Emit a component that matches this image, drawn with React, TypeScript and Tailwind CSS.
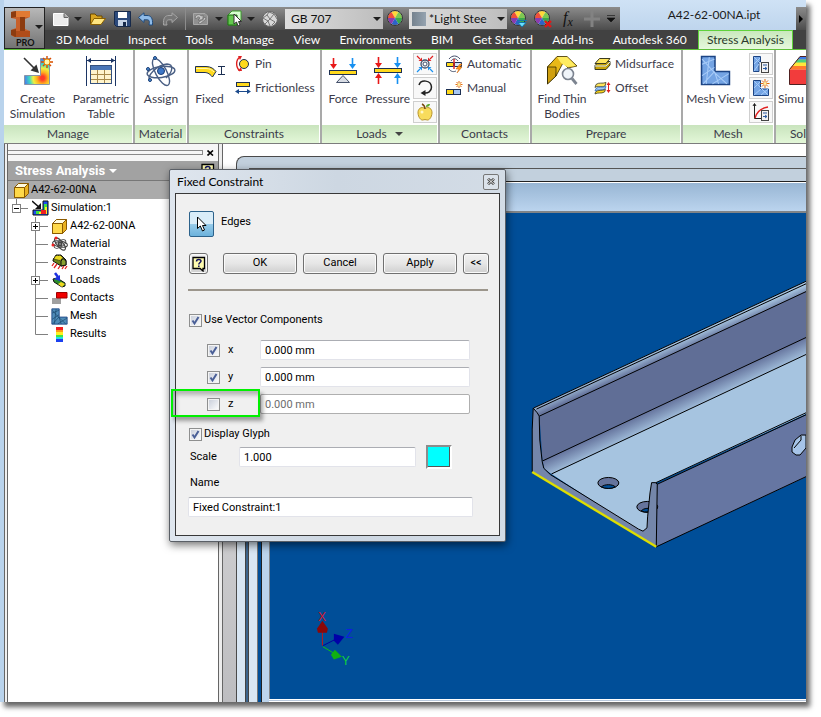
import type { ReactNode } from 'react'

type IconProps = { w: number; h: number; children: ReactNode }

function Icon({ w, h, children }: IconProps) {
  return (
    <svg width={w} height={h} viewBox={`0 0 ${w} ${h}`} className="block shrink-0" aria-hidden="true">
      {children}
    </svg>
  )
}

function Caret({ color = '#1e1e1e' }: { color?: string }) {
  return (
    <Icon w={8} h={4}>
      <path d="M0 0H8L4 4Z" fill={color} />
    </Icon>
  )
}

/* ---------- Quick access toolbar icons ---------- */

const NewIcon = () => (
  <Icon w={18} h={16}>
    <path d="M1.500 2.500H12L16 6.500V14.500H1.500Z" fill="#ececec" stroke="#fff" />
    <path d="M12 2.500V6.500H16" fill="#aaa" stroke="#666" />
  </Icon>
)

const OpenIcon = () => (
  <Icon w={18} h={16}>
    <path d="M1.500 13V3H6L8 5H13V7" fill="#d9a520" stroke="#6b4a00" />
    <path d="M1.500 13.500L5 7.500H16.500L12 13.500Z" fill="#ffe680" stroke="#8a6000" />
  </Icon>
)

const SaveIcon = () => (
  <Icon w={17} h={16}>
    <path d="M.5.5H16.500V15.500H2.500L.5 13.500Z" fill="#2c4a7c" stroke="#16294a" />
    <rect x="4" y="1" width="9" height="6" fill="#fff" />
    <rect x="4" y="9" width="9" height="6" fill="#c5d3e6" />
    <rect x="9" y="11" width="3" height="4" fill="#16294a" />
  </Icon>
)

const UndoIcon = () => (
  <Icon w={16} h={14}>
    <path d="M.5 5.500L6 .8V3.500H9C13 3.500 15 6 14.500 13H11C12 9 11 7.800 9 7.800H6V10.500Z" fill="#8fbbe8" stroke="#1f4a7c" />
  </Icon>
)

const RedoIcon = () => (
  <Icon w={16} h={14}>
    <path d="M15.500 5.500L10 .8V3.500H7C3 3.500 1 6 1.500 13H5C4 9 5 7.800 7 7.800H10V10.500Z" fill="#777" stroke="#a5a5a5" />
  </Icon>
)

const UpdateIcon = () => (
  <Icon w={17} h={15}>
    <path d="M1.500 2.500H13L15.500 5V13.500H1.500Z" fill="#909090" stroke="#a8a8a8" />
    <path d="M3 6C5 3 8 3 9 5L11 4V9H6L8 7C7 5 5 6 4 8ZM6 12L13 6L14 8L8 13Z" fill="#c4c4c4" stroke="#686868" strokeWidth="0.700" />
  </Icon>
)

const SelectIcon = () => (
  <Icon w={17} h={17}>
    <path d="M1 5L5 1H14V11L10 15H1Z" fill="#d7ffd0" stroke="#3a9c2a" />
    <path d="M1 5H10V15H1Z" fill="#64c84e" stroke="#1f6f14" />
    <path d="M7 4V14L9.500 12L11 16L13 15L11.500 11.500H14.500Z" fill="#fff" stroke="#333" />
  </Icon>
)

const SphereIcon = () => (
  <Icon w={16} h={16}>
    <circle cx="8" cy="8" r="7.500" fill="#d8d8d8" stroke="#666" />
    <path d="M1 7L5 4L8 8L12 3L15 8M3 13L6 10L8 15M8 8L13 11L10 14M5 4L7 1L12 3M1 7L6 10L8 8" fill="none" stroke="#777" />
  </Icon>
)

function Wheel({ badge }: { badge?: 'down' | 'x' }) {
  return (
    <Icon w={18} h={18}>
      <circle cx="8" cy="8" r="7.500" fill="#e8e8e8" />
      <path d="M8 8L4.500 2A7 7 0 0 1 11.500 2Z" fill="#ffd83a" />
      <path d="M8 8L11.500 2A7 7 0 0 1 15 8Z" fill="#7ec850" />
      <path d="M8 8H15A7 7 0 0 1 11.500 14Z" fill="#3aa84c" />
      <path d="M8 8L11.500 14A7 7 0 0 1 4.500 14Z" fill="#2c62c8" />
      <path d="M8 8L4.500 14A7 7 0 0 1 1 8Z" fill="#8a3cb0" />
      <path d="M8 8H1A7 7 0 0 1 4.500 2Z" fill="#f0503a" />
      <circle cx="8" cy="8" r="7.500" fill="none" stroke="#333" />
      {badge === 'down' && <path d="M7 10.500H17M8 12.500H16L12 17Z" fill="#6ce0ff" stroke="#1678a8" />}
      {badge === 'x' && <path d="M11 11L17 17M17 11L11 17" stroke="#e01818" strokeWidth="2.400" />}
    </Icon>
  )
}

const PlusIcon = () => (
  <Icon w={16} h={16}>
    <path d="M8 0V16M0 8H16" stroke="#828282" strokeWidth="3" />
  </Icon>
)

/* ---------- Ribbon icons ---------- */

const CreateSimIcon = () => (
  <Icon w={32} h={34}>
    <defs>
      <radialGradient id="heat" cx="0.72" cy="0.75" r="0.75">
        <stop offset="0.1" stopColor="#ff3a2a" />
        <stop offset="0.3" stopColor="#ffb020" />
        <stop offset="0.5" stopColor="#f0f040" />
        <stop offset="0.7" stopColor="#40d8c0" />
        <stop offset="1" stopColor="#4a70f0" />
      </radialGradient>
    </defs>
    <path d="M2.500 20.500H18.500V3.500H27.500V29.500H2.500Z" fill="url(#heat)" stroke="#8a94a8" />
    <path d="M2 3L14 15" stroke="#333" strokeWidth="1.600" />
    <path d="M17 18L8.500 15.500L14.500 9.500Z" fill="#333" />
    <path d="M25 1V13M19 7H31M21 3L29 11M29 3L21 11" stroke="#d84c00" strokeWidth="1.400" />
    <circle cx="25" cy="7" r="3" fill="#fff6b0" stroke="#e88a00" />
  </Icon>
)

const ParamTableIcon = () => (
  <Icon w={32} h={32}>
    <path d="M1.500 1V31M30.500 1V31M2 5.500H30" stroke="#1c3564" fill="none" />
    <path d="M2 5.500L6 3V8ZM30 5.500L26 3V8Z" fill="#1c3564" />
    <rect x="5.500" y="10.500" width="21" height="18" fill="#fff4cc" stroke="#34507e" />
    <rect x="6" y="11" width="20" height="4" fill="#4a76b8" />
    <path d="M6 19.500H26M6 24.500H26M12.500 15V28M19.500 15V28" stroke="#a88a4a" />
  </Icon>
)

const AtomIcon = () => (
  <Icon w={32} h={32}>
    <g fill="none" stroke="#4a5f84" strokeWidth="1.400">
      <ellipse cx="16" cy="17" rx="14" ry="5.500" transform="rotate(-8 16 17)" />
      <ellipse cx="16" cy="17" rx="15" ry="5.500" transform="rotate(62 16 17)" />
      <path d="M5 26C1 21 12 10 22 9C29 9 28 17 21 23" />
    </g>
    <circle cx="16" cy="16" r="3.500" fill="#3e78c8" stroke="#1a3c74" />
    <circle cx="10" cy="3" r="1.500" fill="#4a90d8" stroke="#1a3c74" />
    <circle cx="3" cy="14" r="1.500" fill="#4a90d8" stroke="#1a3c74" />
    <circle cx="5" cy="25" r="1.500" fill="#4a90d8" stroke="#1a3c74" />
  </Icon>
)

const FixedIcon = () => (
  <Icon w={32} h={32}>
    <path d="M1.500 11.500H12C17 11.500 20 14 22 16.500L18.500 22C15 18 13 17.500 10 17.500H1.500Z" fill="#ffd91c" stroke="#1c2f52" />
    <path d="M2 13.500H12C16 13.500 18 15 20 17" stroke="#fff7b0" fill="none" />
    <path d="M24 11.500H31M27.500 12V19M24 19.500H31" stroke="#1c2f52" fill="none" />
  </Icon>
)

const PinIcon = () => (
  <Icon w={16} h={18}>
    <circle cx="9" cy="9" r="4.500" fill="#ffd91c" stroke="#1c2f52" />
    <path d="M5 2C.5 5 .5 12 5 16" stroke="#e02020" fill="none" strokeWidth="1.400" />
    <path d="M3 1H7L5 5ZM3 16H7L6 12Z" fill="#e02020" />
  </Icon>
)

const FrictionlessIcon = () => (
  <Icon w={16} h={14}>
    <rect x="1.500" y="1.500" width="13" height="4" fill="#ffd91c" stroke="#1c2f52" />
    <path d="M1 10.500H15" stroke="#1c4a8c" />
    <path d="M0 10.500L4 8V13ZM16 10.500L12 8V13Z" fill="#1c4a8c" />
  </Icon>
)

const ForceIcon = () => (
  <Icon w={28} h={30}>
    <path d="M4.500 3V12" stroke="#e81818" strokeWidth="1.600" />
    <path d="M1 9H8L4.500 14Z" fill="#e81818" />
    <path d="M23.500 3V12" stroke="#1890f0" strokeWidth="1.600" />
    <path d="M20 9H27L23.500 14Z" fill="#1890f0" />
    <rect x=".5" y="15.500" width="27" height="4" fill="#ffd91c" stroke="#1c2f52" />
    <path d="M14 20.500L20.500 27.500H7.500Z" fill="#d8dce4" stroke="#44506a" />
  </Icon>
)

const PressureIcon = () => (
  <Icon w={28} h={30}>
    <path d="M4.500 2V11M4.500 29V20" stroke="#e81818" strokeWidth="1.600" />
    <path d="M1 8H8L4.500 13ZM1 23H8L4.500 18Z" fill="#e81818" />
    <path d="M23.500 2V11M23.500 29V20" stroke="#1890f0" strokeWidth="1.600" />
    <path d="M20 8H27L23.500 13ZM20 23H27L23.500 18Z" fill="#1890f0" />
    <rect x=".5" y="13.500" width="27" height="4" fill="#ffd91c" stroke="#1c2f52" />
  </Icon>
)

const BearingIcon = () => (
  <Icon w={18} h={18}>
    <path d="M1 1L4 4M17 1L14 4" stroke="#e02020" strokeWidth="1.200" />
    <path d="M6 6H2.500L6 2.500ZM12 6H15.500L12 2.500Z" fill="#e02020" />
    <path d="M1 17L4 14M17 17L14 14" stroke="#1890f0" strokeWidth="1.200" />
    <path d="M6 12H2.500L6 15.500ZM12 12H15.500L12 15.500Z" fill="#1890f0" />
    <circle cx="9" cy="9" r="4" fill="#e8edf4" stroke="#44506a" strokeWidth="1.300" />
    <circle cx="9" cy="9" r="2" fill="#fff" stroke="#44506a" />
  </Icon>
)

const MomentIcon = () => (
  <Icon w={18} h={18}>
    <path d="M3 6C5 0 15 1 15.500 8C15.500 12.500 12 14.500 8 14" stroke="#222" strokeWidth="1.500" fill="none" />
    <path d="M4.500 14L9.500 11V17Z" fill="#222" />
  </Icon>
)

const AppleIcon = () => (
  <Icon w={16} h={18}>
    <path d="M8 5.500C4 3 .8 6 1 10C1.300 14.500 4 17.500 6 17C7 16.500 9 16.500 10 17C12 17.500 14.700 14.500 15 10C15.200 6 12 3 8 5.500Z" fill="#f8dc5c" stroke="#b8942c" />
    <path d="M8 6C8 3 7 2 5 1" stroke="#7a4a10" fill="none" strokeWidth="1.400" />
    <path d="M9 4C9 1 11 1 13 1C13 3 11 4 9 4Z" fill="#5ca82c" />
    <circle cx="5" cy="9" r="1.500" fill="#fff8c8" />
  </Icon>
)

const AutoContactIcon = () => (
  <Icon w={17} h={18}>
    <path d="M3 4C6 0 11 0 14 4M5 6C7 3 10 3 12 6M3 14C5 17 8 17 10 16" stroke="#44506a" fill="none" />
    <path d="M.5 7.500H7.500V11.500H.5Z" fill="#ffd91c" stroke="#1c2f52" />
    <path d="M8.500 7.500H15.500V11.500H8.500Z" fill="#d8e6fa" stroke="#1c2f52" />
    <path d="M8 4V14" stroke="#e02020" strokeWidth="1.400" />
    <path d="M14 9L10 14H13L11 18L16 12H13.500L16 9Z" fill="#ff9a1c" stroke="#c85a00" strokeWidth="0.500" />
  </Icon>
)

const ManualContactIcon = () => (
  <Icon w={17} h={16}>
    <rect x=".5" y="9.500" width="7" height="5" fill="#ffd91c" stroke="#1c2f52" />
    <rect x="7.500" y="9.500" width="7" height="5" fill="#a8c8f4" stroke="#1c2f52" />
    <path d="M13 1V8M9.500 4.500H16.500M10.500 2L15.500 7M15.500 2L10.500 7" stroke="#e06a10" />
    <circle cx="13" cy="4.500" r="1.500" fill="#fff0a0" />
  </Icon>
)

const ThinBodiesIcon = () => (
  <Icon w={32} h={32}>
    <path d="M1.500 12L12 1.500L10 21L1.500 29Z" fill="#d0a010" stroke="#3c3000" />
    <path d="M1.500 12L11 1.500H21L31 11L22 13L17 8L10 21V12Z" fill="#e8b818" stroke="#3c3000" strokeWidth="0.800" />
    <path d="M11 2H21L30 11L21 12L15 8Z" fill="#ffec60" />
    <circle cx="22" cy="19" r="5.500" fill="#eef4fa" fillOpacity="0.900" stroke="#7c8490" strokeWidth="1.600" />
    <path d="M26 23.500L30.500 29" stroke="#7c8490" strokeWidth="2.800" />
  </Icon>
)

const MidsurfaceIcon = () => (
  <Icon w={17} h={14}>
    <path d="M1 8.500L5 4.500H16V8L12 12.500H1Z" fill="#c8a408" stroke="#3a3a20" />
    <path d="M1 6.500L5.500 1.500H16L12 6.500Z" fill="#ffe65c" stroke="#3a3a20" />
    <path d="M1 9H12L16 5" stroke="#cfe0ff" fill="none" />
  </Icon>
)

const OffsetIcon = () => (
  <Icon w={17} h={14}>
    <path d="M2 3.500C5 1 8 3 12 1.500L11 5C7 7 4 4 1 6.500Z" fill="#ffe65c" stroke="#3a3a20" strokeWidth="0.800" />
    <path d="M2 7.500C5 5 8 7 12 5.500L11 8C7 10 4 8 1 10Z" fill="#a8ccf4" stroke="#2c6cc0" strokeWidth="0.800" />
    <path d="M1.500 11C4 8.500 8 10 11.500 8.500L10.500 11C7 13 4 11 1 13Z" fill="#ffd91c" stroke="#3a3a20" strokeWidth="0.800" />
    <path d="M14.500 2V11" stroke="#e02020" />
    <path d="M12.500 4H16.500L14.500 1ZM12.500 9H16.500L14.500 12Z" fill="#e02020" />
  </Icon>
)

function MeshShape({ size, dark }: { size: number; dark?: boolean }) {
  return (
    <svg width={size} height={size} viewBox="0 0 30 30" className="block shrink-0" aria-hidden="true">
      <path d="M1.500 1.500H14.500V16H28.500V28.500H1.500Z" fill={dark ? '#4f8cb8' : '#74a4e4'} stroke="#1c4484" strokeWidth="1.500" />
      <path d="M2 9L14 4M2 4L14 17L26 28M3 28L14 16M2 20L14 12M9 2L6 28M14 16L18 28M28 18L12 28" stroke={dark ? '#123c60' : '#a8ccf8'} fill="none" />
    </svg>
  )
}

const Sheet = () => (
  <>
    <rect x="9.500" y="7.500" width="7" height="10" fill="#f2f2f2" stroke="#444" />
    <path d="M11 10H15M11 13.500H15M13 12L15 13.500L13 15" stroke="#2c5aa0" fill="none" />
  </>
)

const MeshSettingsIcon = () => (
  <Icon w={18} h={18}>
    <path d="M1.500 1.500H8.500V7H7V16.500H1.500Z" fill="#74a4e4" stroke="#1c4484" />
    <path d="M2 2L8 8M2 9L8 3M2 16L7 9" stroke="#a8ccf8" />
    <Sheet />
  </Icon>
)

const LocalMeshIcon = () => (
  <Icon w={18} h={18}>
    <path d="M1.500 1.500H8.500V10H16.500V16.500H1.500Z" fill="#74a4e4" stroke="#1c4484" />
    <path d="M2 2L16 16M2 9L8 3M2 16L9 10M9 16L16 10" stroke="#a8ccf8" />
    <path d="M13 0V9M8.500 4.500H17.500M10 1.500L16 7.500M16 1.500L10 7.500" stroke="#e06a10" />
    <circle cx="13" cy="4.500" r="1.500" fill="#fff0a0" />
  </Icon>
)

const ConvergenceIcon = () => (
  <Icon w={18} h={18}>
    <path d="M2.500 1V15.500H9M1 3L2.500 .5L4 3" stroke="#222" fill="none" />
    <path d="M3 15C5 8 9 5 16 4" stroke="#e02020" fill="none" strokeWidth="1.500" />
    <Sheet />
  </Icon>
)

const SimulateIcon = () => (
  <Icon w={32} h={32}>
    <path d="M1.500 14.500L12 1.500H32V14.500Z" fill="#ffe63c" />
    <path d="M1.500 14.500L4 11H32V14.500Z" fill="#ff7a2c" />
    <path d="M7 7.500L9.500 4.500H32V7.500Z" fill="#4cd07a" />
    <path d="M9.500 4.500L12 1.500H32V4.500Z" fill="#3c7ce8" />
    <path d="M1.500 14.500H32V29.500H1.500Z" fill="#f23c3c" />
    <path d="M1.500 14.500L12 1.500H32M1.500 14.500V29.500H32" fill="none" stroke="#502020" />
  </Icon>
)

/* ---------- Ribbon ---------- */

function Panel({ label, className, menu, children }: { label: string; className: string; menu?: boolean; children: ReactNode }) {
  return (
    <section className={`flex flex-col border-r-2 border-[#a9a9a9] ${className}`}>
      <div className="flex h-[75px] bg-white">{children}</div>
      <div className="mr-px flex h-[18px] items-center justify-center gap-2 bg-gradient-to-b from-[#c9e4bd] to-[#e3f7d8]">
        {label}
        {menu && <Caret color="#444" />}
      </div>
    </section>
  )
}

function BigButton({ icon, lines, className }: { icon: ReactNode; lines: string[]; className: string }) {
  return (
    <button className={`flex shrink-0 flex-col items-center pt-[5px] leading-[15px] whitespace-nowrap ${className}`}>
      <span className="flex h-[36px] items-start justify-center">{icon}</span>
      {lines.map((line) => (
        <span key={line}>{line}</span>
      ))}
    </button>
  )
}

function RowButton({ icon, label }: { icon: ReactNode; label: string }) {
  return (
    <button className="flex h-6 items-center gap-1 whitespace-nowrap">
      <span className="flex w-[17px] justify-center">{icon}</span>
      {label}
    </button>
  )
}

function TinyButton({ icon, label }: { icon: ReactNode; label: string }) {
  return (
    <button aria-label={label} className="flex h-[22px] w-6 items-center justify-center border border-[#cfcfcf] bg-[#f8f8f8]">
      {icon}
    </button>
  )
}

function Ribbon() {
  return (
    <div className="flex h-[94px] shrink-0 overflow-hidden border-b border-[#7c7c7c] bg-white text-[12px] text-[#3b3b4a]">
      <Panel label="Manage" className="w-[131px] shrink-0">
        <BigButton icon={<CreateSimIcon />} lines={['Create', 'Simulation']} className="w-[67px]" />
        <BigButton icon={<ParamTableIcon />} lines={['Parametric', 'Table']} className="w-[60px]" />
      </Panel>
      <Panel label="Material" className="w-[54px] shrink-0">
        <BigButton icon={<AtomIcon />} lines={['Assign']} className="w-[52px]" />
      </Panel>
      <Panel label="Constraints" className="w-[133px] shrink-0">
        <BigButton icon={<FixedIcon />} lines={['Fixed']} className="w-[41px]" />
        <div className="flex flex-col pt-[2px] pl-1">
          <RowButton icon={<PinIcon />} label="Pin" />
          <RowButton icon={<FrictionlessIcon />} label="Frictionless" />
        </div>
      </Panel>
      <Panel label="Loads" className="w-[118px] shrink-0" menu>
        <BigButton icon={<ForceIcon />} lines={['Force']} className="w-[42px]" />
        <BigButton icon={<PressureIcon />} lines={['Pressure']} className="w-[47px]" />
        <div className="flex flex-col gap-[2px] pt-[3px] pl-[2px]">
          <TinyButton icon={<BearingIcon />} label="Bearing load" />
          <TinyButton icon={<MomentIcon />} label="Moment" />
          <TinyButton icon={<AppleIcon />} label="Gravity" />
        </div>
      </Panel>
      <Panel label="Contacts" className="w-[92px] shrink-0">
        <div className="flex flex-col pt-[2px] pl-[6px]">
          <RowButton icon={<AutoContactIcon />} label="Automatic" />
          <RowButton icon={<ManualContactIcon />} label="Manual" />
        </div>
      </Panel>
      <Panel label="Prepare" className="w-[151px] shrink-0">
        <BigButton icon={<ThinBodiesIcon />} lines={['Find Thin', 'Bodies']} className="w-[60px]" />
        <div className="flex flex-col pt-[2px] pl-[2px]">
          <RowButton icon={<MidsurfaceIcon />} label="Midsurface" />
          <RowButton icon={<OffsetIcon />} label="Offset" />
        </div>
      </Panel>
      <Panel label="Mesh" className="w-[93px] shrink-0">
        <BigButton icon={<MeshShape size={31} />} lines={['Mesh View']} className="w-[65px]" />
        <div className="flex flex-col gap-[2px] pt-[3px] pl-px">
          <TinyButton icon={<MeshSettingsIcon />} label="Mesh settings" />
          <TinyButton icon={<LocalMeshIcon />} label="Local mesh control" />
          <TinyButton icon={<ConvergenceIcon />} label="Convergence settings" />
        </div>
      </Panel>
      <section className="min-w-0 flex-1 overflow-hidden">
        <button className="flex h-[75px] flex-col items-start pt-[5px] pl-[2px] leading-[15px]">
          <span className="flex h-[36px] items-start pl-[10px]">
            <SimulateIcon />
          </span>
          Simu
        </button>
        <div className="flex h-[18px] items-center justify-end bg-gradient-to-b from-[#c9e4bd] to-[#e3f7d8]">Sol</div>
      </section>
    </div>
  )
}

/* ---------- Title bar, toolbar and tabs ---------- */

const tabs = ['3D Model', 'Inspect', 'Tools', 'Manage', 'View', 'Environments', 'BIM', 'Get Started', 'Add-Ins', 'Autodesk 360']

function Tool({ label, className = 'w-6', children }: { label: string; className?: string; children: ReactNode }) {
  return (
    <button aria-label={label} className={`flex shrink-0 items-center justify-center ${className}`}>
      {children}
    </button>
  )
}

function Combo({ label, value, swatch }: { label: string; value: string; swatch?: boolean }) {
  return (
    <div className="relative flex h-[20px] w-[98px] shrink-0 items-center bg-gradient-to-r from-[#dedede] to-[#bdbdbd]">
      {swatch && <span className="ml-[3px] h-[14px] w-[14px] shrink-0 bg-gradient-to-r from-[#75828e] to-[#95a3b0]" />}
      <select aria-label={label} className={`h-full min-w-0 flex-1 appearance-none bg-transparent text-[12px] text-[#111] ${swatch ? 'pl-[3px]' : 'pl-[6px]'}`}>
        <option>{value}</option>
      </select>
      <span className="pointer-events-none absolute right-[2px]">
        <Caret />
      </span>
    </div>
  )
}

function QuickAccess() {
  return (
    <div className="flex h-[23px] w-[575px] shrink-0 items-center bg-gradient-to-b from-[#8c8c8c] to-[#4c4c4c] pl-[6px]">
      <Tool label="New" className="w-5"><NewIcon /></Tool>
      <Tool label="New options" className="w-[14px]"><Caret /></Tool>
      <Tool label="Open" className="w-[25px]"><OpenIcon /></Tool>
      <Tool label="Save"><SaveIcon /></Tool>
      <Tool label="Undo"><UndoIcon /></Tool>
      <Tool label="Redo"><RedoIcon /></Tool>
      <span className="ml-[3px] h-full w-px bg-[#8c8c8c]" />
      <Tool label="Update" className="w-[29px]"><UpdateIcon /></Tool>
      <Tool label="Update options" className="w-2"><Caret /></Tool>
      <Tool label="Select"><SelectIcon /></Tool>
      <Tool label="Select options" className="w-2"><Caret /></Tool>
      <Tool label="Material browser" className="w-[30px]"><SphereIcon /></Tool>
      <Combo label="Material" value="GB 707" />
      <Tool label="Appearance browser" className="w-[26px]"><Wheel /></Tool>
      <Combo label="Appearance" value="*Light Stee" swatch />
      <Tool label="Adjust appearance"><Wheel badge="down" /></Tool>
      <Tool label="Clear appearance"><Wheel badge="x" /></Tool>
      <Tool label="Parameters" className="w-[26px] font-['Liberation_Serif',serif] text-base leading-4 text-[#111] italic">
        <span>f<sub className="text-xs">x</sub></span>
      </Tool>
      <Tool label="Add" className="w-[22px]"><PlusIcon /></Tool>
      <Tool label="Customize" className="w-4">
        <Icon w={8} h={7}><path d="M0 .5H8M0 3H8L4 7Z" fill="#111" stroke="#111" strokeWidth="0.600" /></Icon>
      </Tool>
    </div>
  )
}

function Header() {
  return (
    <header className="flex shrink-0 border-b border-[#5fbf3a] bg-gradient-to-b from-[#cfe2f5] to-[#b4cde8] pt-[7px]">
      <button className="relative flex h-[42px] w-[41px] shrink-0 items-start border border-[#222] bg-gradient-to-b from-[#b8b8b8] to-[#747474] pt-[3px] pl-[6px]">
        <Icon w={20} h={27}>
          <path d="M0 1L5 0H19V6L14 8V18L19 20V26H3L0 24V19L5 17V8L0 7Z" fill="#c8602a" />
          <path d="M5 0H19V6H5Z" fill="#e07a34" />
          <path d="M9 6H14V20H9Z" fill="#8c3c10" />
          <path d="M3 20H19V26H3Z" fill="#b04c18" />
          <path d="M0 1L5 0V6L0 7ZM0 19L5 18V26L0 24Z" fill="#8c3c10" />
        </Icon>
        <span className="absolute bottom-0 left-[11px] text-[9px] leading-[11px] font-bold text-[#111]">PRO</span>
        <span className="absolute top-[17px] right-px">
          <Caret />
        </span>
      </button>
      <div className="min-w-0 flex-1">
        <div className="flex">
          <QuickAccess />
          <h1 className="flex-1 pl-3 text-center text-[12px] leading-4 text-[#1c1c1c]">A42-62-00NA.ipt</h1>
          <button aria-label="Scroll ribbon" className="flex w-[10px] items-center justify-center bg-gradient-to-b from-[#8c8c8c] to-[#4c4c4c]">
            <Icon w={4} h={8}><path d="M0 0L4 4L0 8Z" fill="#000" /></Icon>
          </button>
        </div>
        <nav className="flex h-[19px] items-center justify-between bg-[#414141] pr-[13px] pl-[11px] text-[12px] whitespace-nowrap text-white">
          {tabs.map((tab) => (
            <a key={tab} href="#">{tab}</a>
          ))}
          <a href="#" className="-ml-2 flex h-full items-center border border-b-0 border-[#5fd23a] bg-gradient-to-b from-[#c9e8bd] to-[#e6f8dc] px-2 text-[#2a3a2a]">
            Stress Analysis
          </a>
        </nav>
      </div>
    </header>
  )
}

/* ---------- Model browser ---------- */

function PartIcon() {
  return (
    <Icon w={17} h={17}>
      <path d="M1.500 5.500L5.500 1.500H15.500V11.500L11.500 15.500H1.500Z" fill="#e8b020" stroke="#8a5a00" />
      <path d="M1.500 5.500L5.500 1.500H15.500L11.500 5.500Z" fill="#fffbe0" stroke="#8a5a00" />
      <path d="M1.500 5.500H11.500V15.500H1.500Z" fill="#ffd94a" stroke="#8a5a00" />
    </Icon>
  )
}

const SimTreeIcon = () => (
  <Icon w={17} h={16}>
    <path d="M1 10H11V1H16V15H1Z" fill="#1c50f0" stroke="#111" />
    <path d="M4 11H12V4H15V14H4Z" fill="#40e040" />
    <path d="M7 12H13V7H15V14H7Z" fill="#ffee20" />
    <path d="M9 10H14V14H9Z" fill="#f02020" />
    <path d="M0 1L8 8" stroke="#111" strokeWidth="1.600" />
    <path d="M9 9H3L9 3Z" fill="#111" />
  </Icon>
)

const MaterialTreeIcon = () => (
  <Icon w={17} h={16}>
    <g fill="none" stroke="#444">
      <ellipse cx="9" cy="8" rx="7.500" ry="3" transform="rotate(10 9 8)" />
      <ellipse cx="9" cy="8" rx="7.500" ry="3" transform="rotate(50 9 8)" />
      <ellipse cx="9" cy="8" rx="6.500" ry="3" transform="rotate(-30 9 8)" />
    </g>
    <circle cx="9" cy="8" r="2" fill="#777" stroke="#222" />
    <circle cx="5" cy="2" r="1.500" fill="#f02020" />
    <circle cx="2" cy="9" r="1.500" fill="#f02020" />
  </Icon>
)

const ConstraintTreeIcon = () => (
  <Icon w={17} h={16}>
    <path d="M2 6L5 1H10L15 6V11L10 12L2 7Z" fill="#6c8418" stroke="#111" />
    <path d="M2.500 5L5 1.500H10L12 4L9 6.500Z" fill="#e8d820" stroke="#111" strokeDasharray="1 1" />
    <path d="M10 12V7L12 4.500L15 7V11Z" fill="#88a030" stroke="#111" />
    <path d="M1 12L3 9M3 14L6 10M7 15L9 12M11 15L13 12M14 15L16 12" stroke="#e02020" strokeWidth="1.300" />
  </Icon>
)

const LoadTreeIcon = () => (
  <Icon w={17} h={16}>
    <path d="M2 7L6 6L14 11V14L11 15L3 10Z" fill="#2c8c2c" stroke="#111" />
    <path d="M7 12L10 10L14 12L11 15Z" fill="#f0d820" />
    <path d="M4 1L7 5" stroke="#1c30e0" strokeWidth="2.500" />
    <path d="M9 9L3 7L9 3Z" fill="#1c30e0" />
  </Icon>
)

const ContactTreeIcon = () => (
  <Icon w={17} h={16}>
    <path d="M1 8H10V14H1Z" fill="#a0a0a0" />
    <path d="M5.500 2.500H16V8H5.500Z" fill="#f00000" stroke="#a00000" />
  </Icon>
)

const ResultTreeIcon = () => (
  <Icon w={17} h={16}>
    <path d="M5 1H12V4H5Z" fill="#f02020" />
    <path d="M5 4H12V6H5Z" fill="#ff9a10" />
    <path d="M5 6H12V9H5Z" fill="#fff020" />
    <path d="M5 9H12V11H5Z" fill="#40e840" />
    <path d="M5 11H12V13H5Z" fill="#20e0e8" />
    <path d="M5 13H12V16H5Z" fill="#1c40f0" />
  </Icon>
)

function Branch({ box, last }: { box?: boolean; last?: boolean }) {
  return (
    <Icon w={20} h={18}>
      <path d={last ? 'M4.500 0V9.500H17' : 'M4.500 0V18M4.500 9.500H17'} stroke="#808080" fill="none" />
      {box && (
        <>
          <rect x=".5" y="5.500" width="8" height="8" fill="#fff" stroke="#808080" />
          <path d="M2 9.500H7M4.500 7V12" stroke="#000" />
        </>
      )}
    </Icon>
  )
}

const branches: { label: string; icon: ReactNode; box?: boolean }[] = [
  { label: 'A42-62-00NA', icon: <PartIcon />, box: true },
  { label: 'Material', icon: <MaterialTreeIcon /> },
  { label: 'Constraints', icon: <ConstraintTreeIcon /> },
  { label: 'Loads', icon: <LoadTreeIcon />, box: true },
  { label: 'Contacts', icon: <ContactTreeIcon /> },
  { label: 'Mesh', icon: <MeshShape size={17} dark /> },
  { label: 'Results', icon: <ResultTreeIcon /> },
]

function HelpGlyph() {
  return (
    <Icon w={14} h={16}>
      <path d="M1 1.500H12.500V12.500H11V15L8 12.500H1Z" fill="#fffcb0" stroke="#000" strokeWidth="1.300" />
      <path d="M4.500 5.500C4.500 3 9 3 9 5C9 6.500 6.800 6.500 6.800 8.500M6.800 9.500V11" stroke="#101060" strokeWidth="1.500" fill="none" />
    </Icon>
  )
}

function ModelBrowser() {
  return (
    <aside className="flex w-[211px] shrink-0 flex-col border-l border-[#666] bg-white text-black">
      <div className="flex h-[17px] items-center gap-1 bg-[#f6f6f6]">
        <span className="h-[5px] flex-1 border border-l-0 border-[#8a8a8a]" />
        <button aria-label="Close browser" className="flex w-[11px] justify-start">
          <Icon w={7} h={6}><path d="M.5.5L6 5.500M6 .5L.5 5.500" stroke="#000" strokeWidth="1.600" /></Icon>
        </button>
      </div>
      <div className="flex h-[20px] items-center gap-1 overflow-hidden border-b border-[#777] bg-[#a2a2a2] pr-[2px] pl-[7px] text-[13px] font-bold text-white">
        Stress Analysis
        <Caret color="#fff" />
        <button aria-label="Help" className="ml-auto mr-px"><HelpGlyph /></button>
      </div>
      <ul className="leading-[18px]">
        <li className="flex h-[18px] items-center gap-px bg-[#ababab] pl-[5px]">
          <PartIcon />
          A42-62-00NA
        </li>
        <li className="flex h-[18px] items-center pl-1">
          <Icon w={20} h={18}>
            <path d="M4.500 0V6M9 9.500H16" stroke="#808080" />
            <rect x=".5" y="5.500" width="8" height="8" fill="#fff" stroke="#808080" />
            <path d="M2 9.500H7" stroke="#000" />
          </Icon>
          <SimTreeIcon />
          <span className="pl-[2px]">Simulation:1</span>
        </li>
        {branches.map(({ label, icon, box }, i) => (
          <li key={label} className="flex h-[18px] items-center pl-[23px]">
            <Branch box={box} last={i === branches.length - 1} />
            {icon}
            <span className="pl-[2px]">{label}</span>
          </li>
        ))}
      </ul>
    </aside>
  )
}

/* ---------- Graphics window ---------- */

function ChannelModel() {
  return (
    <svg viewBox="269 213 537 486" className="block h-full w-full" aria-hidden="true">
      <defs>
        <linearGradient id="lip" gradientUnits="userSpaceOnUse" x1="670" y1="345" x2="674" y2="354">
          <stop offset="0" stopColor="#a6c4e0" />
          <stop offset="1" stopColor="#66749c" />
        </linearGradient>
        <linearGradient id="fillet" gradientUnits="userSpaceOnUse" x1="670" y1="400" x2="678" y2="417">
          <stop offset="0" stopColor="#62709a" />
          <stop offset="1" stopColor="#a6c4e0" />
        </linearGradient>
      </defs>
      <path d="M533 408L806 281V292L539 416Z" fill="url(#lip)" />
      <path d="M539 416L806 291V338L542 461Z" fill="#606e96" />
      <path d="M542 461L806 337V355L551 474L544 469Z" fill="url(#fillet)" />
      <path d="M551 474L806 354V414L655 483L647 532H640Z" fill="#a6c4e0" />
      <path d="M657 484L806 415V477L656 547Z" fill="#6676a2" />
      <g stroke="#000" fill="none">
        <path d="M533 408L806 281M536 409L806 283.500M539 416L806 291.300M542 461L806 337.300M551 474L806 354.300M655 483L806 412.700M657 484.300L806 414.700M656 547L806 476.700" />
      </g>
      <ellipse cx="608" cy="483" rx="10.500" ry="5.500" fill="#66749c" stroke="#000" />
      <path d="M601 487C604 484 612 484 615 487C611 489 605 489 601 487Z" fill="#004e98" stroke="#000" />
      <ellipse cx="647" cy="507" rx="10.500" ry="5.500" fill="#66749c" stroke="#000" />
      <path d="M641 511C643 508 650 508 652 509V512H644Z" fill="#004e98" stroke="#000" />
      <path
        d="M532.700 408L531.700 429V472L656 547L657 484L655 482.700H651.300L649.700 493L647.300 517L646.700 528L642.700 531.300L638.300 529.300L550 474.700L543.300 468.300L541.700 461.700L539.300 440L538.700 416L536.700 412.700Z"
        fill="#7486aa"
        stroke="#000"
      />
      <path d="M806 435H801L795 440L792 447V452L796 455H800L806 448Z" fill="#a6c4e8" stroke="#000" />
      <path d="M801 436L801 440L794 448" fill="none" stroke="#000" />
      <path d="M531.700 472L656 547" stroke="#dede00" strokeWidth="2.400" />
      <g>
        <path d="M321.500 646V630" stroke="#c01818" />
        <path d="M316 629L321.500 621L327 629L326 633H317Z" fill="#8c0808" />
        <path d="M322 646L334 640" stroke="#0000a0" />
        <path d="M333 634L343.500 637L337 645L333 641Z" fill="#0000a8" />
        <path d="M322 647L332 653" stroke="#10c010" />
        <path d="M330 655L334 650L341 657L333 660Z" fill="#10b010" />
        <g className="font-['Liberation_Sans',sans-serif] text-[12px]">
          <text x="317" y="621" fill="#d01830">X</text>
          <text x="345" y="638" fill="#1020e0">Z</text>
          <text x="341" y="665" fill="#10d040">Y</text>
        </g>
      </g>
    </svg>
  )
}

function GraphicsArea() {
  return (
    <div className="flex min-w-0 flex-1 bg-white">
      <div className="w-[5px] shrink-0 border-x border-[#666] bg-[#ededed]" />
      <div className="mt-6 w-[13px] shrink-0 bg-gradient-to-b from-white via-[#d0d0d2] via-60% to-[#bdbdc0]" />
      <div className="mt-3 flex min-w-0 flex-1 rounded-tl-lg border-t border-l border-[#4a4a4a] bg-[#c2d0dd]">
        <div className="mt-10 w-[8px] shrink-0 bg-[#d8e6f3]" />
        <div className="mt-10 w-[4px] shrink-0 border-x border-[#444] bg-[#3c648c]" />
        <div className="mt-[11px] flex min-w-0 flex-1 border-t border-[#555]">
          <div className="w-[8px] shrink-0 bg-[#d8e6f3]" />
          <div className="w-[4px] shrink-0 border-l border-[#777] bg-[#004e98]" />
          <div className="mt-3 flex min-w-0 flex-1 flex-col border-t border-l border-[#222]">
            <div className="h-[29px] shrink-0 border-t border-white bg-gradient-to-b from-[#98b6d4] to-[#bbd4ee]" />
            <div className="flex min-h-0 flex-1 flex-col bg-[#bcd4ec] pl-[7px]">
              <div className="min-h-0 flex-1 border-t-2 border-l border-[#808488] bg-[#004e98]">
                <ChannelModel />
              </div>
              <div className="h-[3px] border-y border-white bg-[#b8c8dc]" />
            </div>
          </div>
        </div>
      </div>
    </div>
  )
}

/* ---------- Fixed Constraint dialog ---------- */

function Check({ label, checked }: { label: string; checked?: boolean }) {
  return (
    <label className="flex items-center">
      <span className="relative mr-[2px] h-[13px] w-[13px]">
        <input
          type="checkbox"
          defaultChecked={checked}
          className="peer block h-[13px] w-[13px] appearance-none border border-[#8e8f8f] bg-gradient-to-br from-[#c6ccd8] to-white shadow-[inset_0_0_0_1px_#f4f4f4]"
        />
        <svg viewBox="0 0 13 13" className="pointer-events-none absolute inset-0 hidden peer-checked:block" aria-hidden="true">
          <path d="M3.500 6.500L5.500 9.500L9.500 3" stroke="#4a5f97" strokeWidth="2" fill="none" />
        </svg>
      </span>
      {label}
    </label>
  )
}

const field = 'h-5 rounded-[2px] border border-[#e2e3ea] border-t-[#abadb3] bg-white px-1'
const pushButton = 'h-[21px] rounded-[3px] border border-[#707070] bg-gradient-to-b from-[#f2f2f2] via-[#e6e6e6] to-[#cfcfcf] shadow-[inset_0_0_0_1px_#fafafa]'

function Axis({ name, enabled }: { name: string; enabled?: boolean }) {
  return (
    <div className="relative ml-[18px] flex h-5 items-center">
      <div className="flex w-[53px] items-center [&_span]:mr-2">
        <Check label={name} checked={enabled} />
      </div>
      <input
        aria-label={`${name} value`}
        defaultValue="0.000 mm"
        disabled={!enabled}
        className={`${field} w-[210px] disabled:border-[#afafaf] disabled:text-[#6d6d6d]`}
      />
      {!enabled && (
        <span className="absolute -top-[5px] -left-[36px] h-[28px] w-[89px] border-2 border-[#00f000] shadow-[3px_4px_4px_rgba(0,0,0,0.35),inset_3px_4px_4px_rgba(0,0,0,0.25)]" />
      )}
    </div>
  )
}

function FixedConstraintDialog() {
  return (
    <div
      role="dialog"
      aria-label="Fixed Constraint"
      className="absolute top-[169px] left-[169px] w-[337px] rounded-[2px] border border-[#5a5f66] bg-gradient-to-r from-[#dfe6ee] via-[#cdd7e2] to-[#d3dce6] p-[5px] pt-0 text-black shadow-[1px_3px_8px_rgba(0,0,0,0.55)]"
    >
      <div className="flex h-[23px] items-center justify-between pr-px pl-[2px] font-['Lato',sans-serif] text-[12px]">
        <h2>Fixed Constraint</h2>
        <button aria-label="Close" className="flex h-4 w-4 items-center justify-center rounded-[2px] border border-[#777] bg-[#dbe2ea]">
          <Icon w={8} h={7}>
            <path d="M1 .8L7 6.200M7 .8L1 6.200" stroke="#444" strokeWidth="2.600" />
            <path d="M1 .8L7 6.200M7 .8L1 6.200" stroke="#fff" strokeWidth="0.900" />
          </Icon>
        </button>
      </div>
      <div className="border border-[#383838] bg-[#f0f0f0] pt-[17px] pr-[10px] pb-[18px] pl-[13px]">
        <div className="flex items-start gap-[7px]">
          <button aria-label="Select edges" className="flex h-[26px] w-[25px] items-center justify-center rounded-[2px] border border-[#2c628b] bg-gradient-to-b from-[#d9edf9] from-50% via-[#98ccea] via-50% to-[#6cb2dc]">
            <Icon w={11} h={16}>
              <path d="M1.500 1V12.500L4.300 10L6.500 15L8.500 14L6.500 9.500H10Z" fill="#fff" stroke="#000" />
            </Icon>
          </button>
          <span className="leading-[22px]">Edges</span>
        </div>
        <div className="mt-4 flex gap-[6px]">
          <button aria-label="Help" className={`${pushButton} mr-[9px] flex w-[19px] items-center justify-center`}>
            <HelpGlyph />
          </button>
          <button className={`${pushButton} w-[74px]`}>OK</button>
          <button className={`${pushButton} w-[74px]`}>Cancel</button>
          <button className={`${pushButton} w-[74px]`}>Apply</button>
          <button className={`${pushButton} w-[26px]`}>&lt;&lt;</button>
        </div>
        <hr className="mr-px -ml-px mt-[15px] border-t-2 border-[#9c968c]" />
        <div className="mt-[20px] flex h-[18px] items-center">
          <Check label="Use Vector Components" checked />
        </div>
        <div className="mt-[11px] flex flex-col gap-[7px]">
          <Axis name="x" enabled />
          <Axis name="y" enabled />
          <Axis name="z" />
        </div>
        <div className="mt-[11px] flex h-[18px] items-center">
          <Check label="Display Glyph" checked />
        </div>
        <div className="mt-[2px] flex h-6 items-center">
          <label htmlFor="scale" className="w-[50px] pl-px">Scale</label>
          <input id="scale" defaultValue="1.000" className={`${field} w-[177px]`} />
          <button aria-label="Glyph color" className="ml-[10px] h-6 w-[26px] border-2 border-t-[#8c8c8c] border-r-white border-b-white border-l-[#8c8c8c] bg-[#00ffff] shadow-[inset_-1px_-1px_0_#555]" />
        </div>
        <div className="mt-[5px] flex flex-col">
          <label htmlFor="name" className="pl-px leading-[18px]">Name</label>
          <input id="name" defaultValue="Fixed Constraint:1" className={`${field} mt-[5px] -ml-px w-[285px]`} />
        </div>
      </div>
    </div>
  )
}

export default function App() {
  return (
    <div className="h-screen overflow-hidden bg-white pr-[15px] pb-[15px] font-['Lato',sans-serif]">
      <div className="relative flex h-full flex-col bg-[#b9d3ec] pl-1 shadow-[4px_5px_5px_rgba(0,0,0,0.6)]">
        <Header />
        <Ribbon />
        <main className="flex min-h-0 flex-1 border-l border-[#666] bg-[#f0f0f0] pl-[2px] font-['Roboto',sans-serif] text-[11px]">
          <ModelBrowser />
          <GraphicsArea />
        </main>
        <div className="font-['Roboto',sans-serif] text-[11px]">
          <FixedConstraintDialog />
        </div>
      </div>
    </div>
  )
}
